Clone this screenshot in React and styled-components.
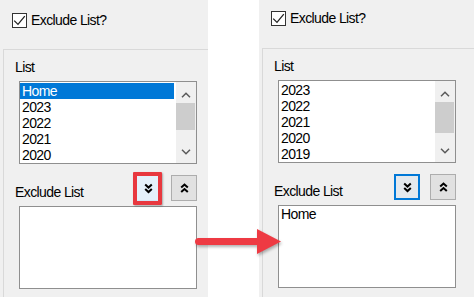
import React from 'react';
import styled, { createGlobalStyle } from 'styled-components';

const Global = createGlobalStyle`
  html, body { margin: 0; padding: 0; background: #fff; }
  body {
    width: 474px; height: 299px; overflow: hidden;
    font-family: "Liberation Sans", Arial, sans-serif;
  }
`;

const Stage = styled.div`
  position: relative;
  width: 474px;
  height: 299px;
  display: flex;
  align-items: flex-start;
  background: #fff;
`;

const Panel = styled.div`
  width: ${p => p.$width}px;
  margin-left: ${p => p.$offset}px;
  height: 297px;
  background: #f0f0f0;
  display: flex;
  flex-direction: column;
  overflow: hidden;
  font-size: 14px;
  letter-spacing: -0.6px;
  line-height: 16px;
  color: #000;
`;

const TopSection = styled.div`
  box-sizing: border-box;
  height: ${p => p.$height}px;
  padding: ${p => p.$pad}px 0 0 12px;
  flex: none;
`;

const CheckRow = styled.label`
  display: flex;
  align-items: center;
  gap: 4px;
`;

const CheckBox = styled.span`
  box-sizing: border-box;
  width: 15px;
  height: 15px;
  border: 1px solid #333;
  background: #fff;
  display: flex;
  align-items: center;
  justify-content: center;
`;

const GroupBox = styled.div`
  flex: 1;
  margin-left: 3px;
  border-top: 1px solid #d9d9d9;
  border-left: 1px solid #d9d9d9;
  padding: 9px 0 0 11px;
  display: flex;
  flex-direction: column;
`;

const FieldLabel = styled.div`
  line-height: 16px;
  margin-bottom: ${p => p.$mb || 0}px;
`;

const ListBox = styled.div`
  box-sizing: border-box;
  margin-left: 4px;
  margin-top: ${p => p.$mt || 0}px;
  width: 178px;
  height: 83px;
  border: 1px solid #8f8f8f;
  background: #fff;
  display: flex;
  overflow: hidden;
  flex: none;
`;

const Items = styled.div`
  flex: 1;
  padding: ${p => p.$pt}px 2px 0 0;
  min-width: 0;
`;

const Row = styled.div`
  height: 16px;
  line-height: 16px;
  padding-left: 2px;
  white-space: nowrap;
  background: ${p => (p.$selected ? '#0078d7' : 'transparent')};
  color: ${p => (p.$selected ? '#fff' : '#000')};
`;

const ScrollBar = styled.div`
  width: 20px;
  background: #f0f0f0;
  display: flex;
  flex-direction: column;
`;

const ScrollArrow = styled.div`
  height: 20px;
  display: flex;
  justify-content: center;
  align-items: flex-start;
  padding-top: ${p => p.$pt}px;
  box-sizing: border-box;
  flex: none;
`;

const Track = styled.div`
  flex: 1;
`;

const Thumb = styled.div`
  margin-top: 1px;
  margin-right: 1px;
  height: ${p => p.$size}px;
  background: #cdcdcd;
`;

const ButtonRow = styled.div`
  display: flex;
  align-items: flex-end;
  gap: 10px;
  margin-top: 11px;
  width: 182px;
`;

const RowLabel = styled.div`
  flex: 1;
  line-height: 16px;
  margin-bottom: 1px;
`;

const IconButton = styled.button`
  position: relative;
  box-sizing: border-box;
  width: 26px;
  height: 26px;
  padding: 0;
  display: flex;
  align-items: center;
  justify-content: center;
  background: ${p =>
    p.$state === 'hover' ? '#e5f1fb' : p.$state === 'focus' ? '#e4e9ee' : '#e1e1e1'};
  border: ${p =>
    p.$state === 'focus'
      ? '2px solid #0078d7'
      : p.$state === 'hover'
      ? '1px solid #d4e8f8'
      : '1px solid #adadad'};
`;

const Highlight = styled.span`
  position: absolute;
  top: -4px;
  bottom: -5px;
  left: -3px;
  right: -2px;
  border: 4px solid #e8383f;
  border-radius: 1px;
  box-shadow: 1px 1px 2px rgba(0, 0, 0, 0.3);
  pointer-events: none;
`;

const ArrowOverlay = styled.svg`
  position: absolute;
  left: 193px;
  top: 226px;
  width: 92px;
  height: 32px;
  overflow: visible;
  pointer-events: none;
  filter: drop-shadow(1px 2px 1.5px rgba(0, 0, 0, 0.3));
`;

const Check = () => (
  <svg width="13" height="13" viewBox="0 0 13 13">
    <polyline points="1.2,6.6 5,10.4 11.8,2.2" fill="none" stroke="#222" strokeWidth="1.3" />
  </svg>
);

const DoubleChevron = ({ dir }) => (
  <svg width="9" height="11" viewBox="0 0 9 11">
    <path
      d={
        dir === 'down'
          ? 'M1.2 1.5 L4.5 4.6 L7.8 1.5 M1.2 6 L4.5 9.1 L7.8 6'
          : 'M1.2 4.6 L4.5 1.5 L7.8 4.6 M1.2 9.1 L4.5 6 L7.8 9.1'
      }
      fill="none"
      stroke="#000"
      strokeWidth="2"
    />
  </svg>
);

const SmallChevron = ({ dir }) => (
  <svg width="10" height="6" viewBox="0 0 10 6">
    <path
      d={dir === 'up' ? 'M1 5.2 L5 1.2 L9 5.2' : 'M1 0.8 L5 4.8 L9 0.8'}
      fill="none"
      stroke="#5a5a5a"
      strokeWidth="1.5"
    />
  </svg>
);

const ListPanel = ({ width, offset, topHeight, topPad, items, selected, thumb, excluded, downState, annotate }) => (
  <Panel $width={width} $offset={offset}>
    <TopSection $height={topHeight} $pad={topPad}>
      <CheckRow>
        <CheckBox>
          <Check />
        </CheckBox>
        <span>Exclude List?</span>
      </CheckRow>
    </TopSection>
    <GroupBox>
      <FieldLabel $mb={6}>List</FieldLabel>
      <ListBox>
        <Items $pt={1}>
          {items.map(it => (
            <Row key={it} $selected={it === selected}>
              {it}
            </Row>
          ))}
        </Items>
        <ScrollBar>
          <ScrollArrow $pt={10}>
            <SmallChevron dir="up" />
          </ScrollArrow>
          <Track>
            <Thumb $size={thumb} />
          </Track>
          <ScrollArrow $pt={6}>
            <SmallChevron dir="down" />
          </ScrollArrow>
        </ScrollBar>
      </ListBox>
      <ButtonRow>
        <RowLabel>Exclude List</RowLabel>
        <IconButton $state={downState} aria-label="Move down">
          <DoubleChevron dir="down" />
          {annotate && <Highlight />}
        </IconButton>
        <IconButton aria-label="Move up">
          <DoubleChevron dir="up" />
        </IconButton>
      </ButtonRow>
      <ListBox $mt={5}>
        <Items $pt={0}>
          {excluded.map(it => (
            <Row key={it}>{it}</Row>
          ))}
        </Items>
      </ListBox>
    </GroupBox>
  </Panel>
);

export default function App() {
  return (
    <>
      <Global />
      <Stage>
        <ListPanel
          width={208}
          offset={0}
          topHeight={49}
          topPad={12}
          items={['Home', '2023', '2022', '2021', '2020']}
          selected="Home"
          thumb={27}
          excluded={[]}
          downState="hover"
          annotate
        />
        <ListPanel
          width={215}
          offset={51}
          topHeight={48}
          topPad={10}
          items={['2023', '2022', '2021', '2020', '2019']}
          selected={null}
          thumb={31}
          excluded={['Home']}
          downState="focus"
        />
        <ArrowOverlay viewBox="0 0 92 32">
          <rect x="2" y="12" width="66" height="7" rx="3.5" fill="#ee3a43" />
          <polygon points="64,3 88,15.5 64,28" fill="#ee3a43" />
        </ArrowOverlay>
      </Stage>
    </>
  );
}
